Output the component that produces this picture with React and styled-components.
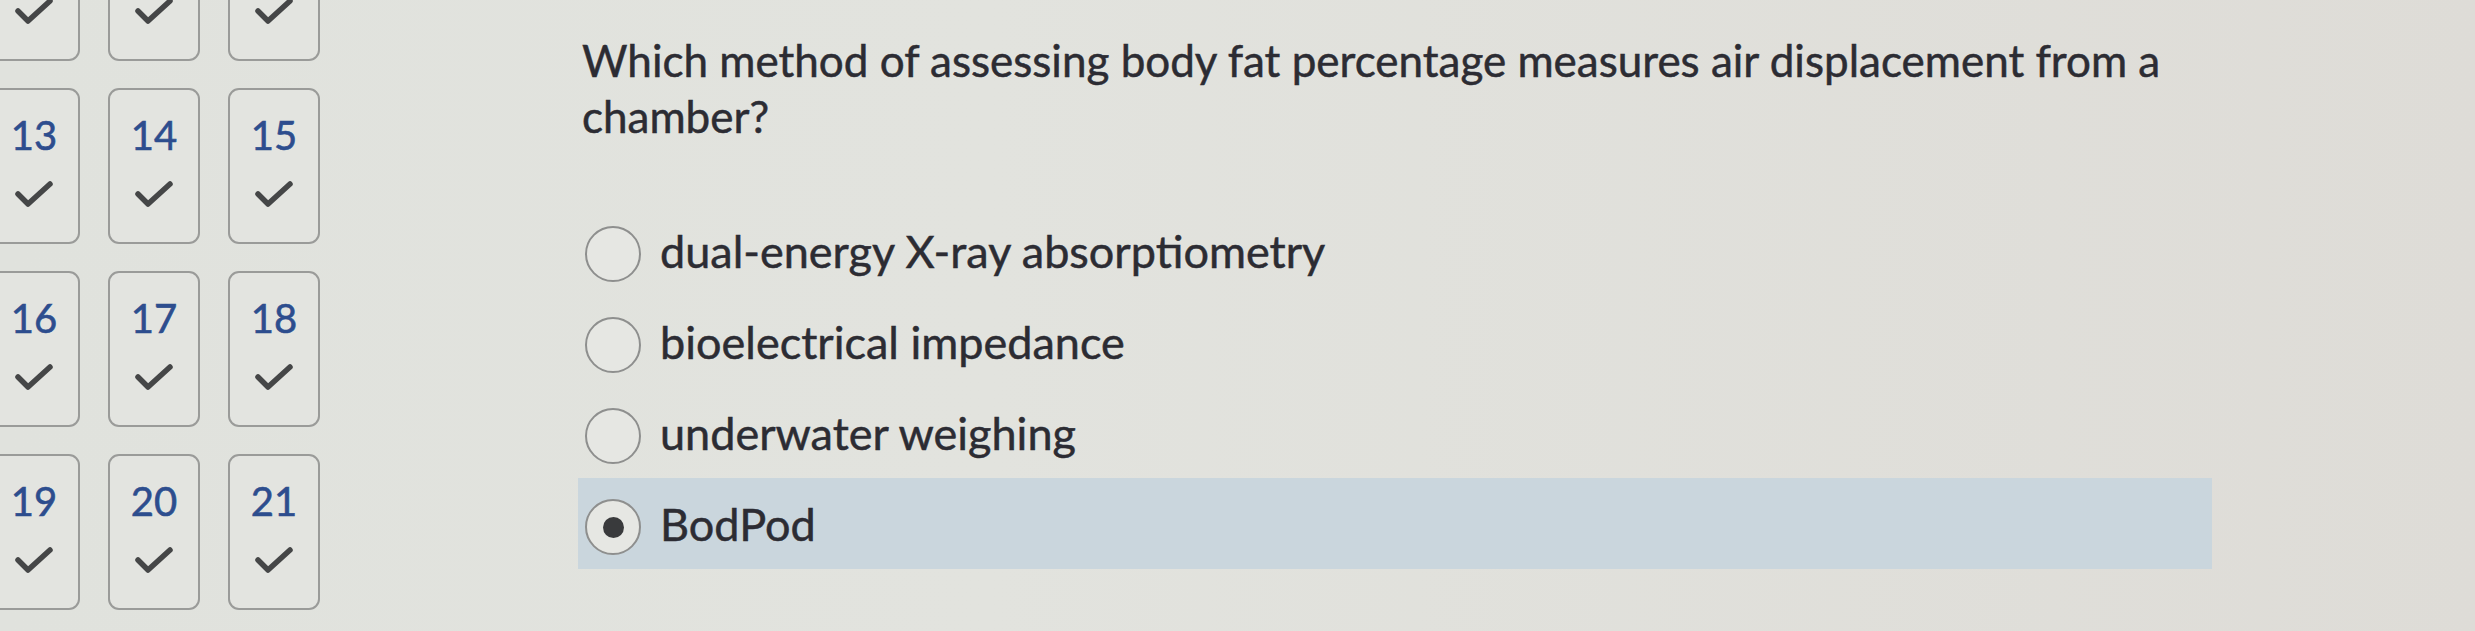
import React from 'react'
import styled, { createGlobalStyle } from 'styled-components'

const GlobalStyle = createGlobalStyle`
  html, body {
    margin: 0;
    padding: 0;
    overflow: hidden;
  }
  body {
    width: 2475px;
    height: 631px;
    background: linear-gradient(90deg, #e0e2dd 0%, #e2e3de 40%, #dedcd7 100%);
    font-family: Lato, "Open Sans", sans-serif;
    color: #2c2c33;
  }
`

const Page = styled.div`
  display: flex;
  align-items: flex-start;
  height: 631px;
  overflow: hidden;
`

const QuestionGrid = styled.nav`
  display: grid;
  grid-template-columns: repeat(3, 92px);
  grid-auto-rows: 156px;
  column-gap: 28px;
  row-gap: 27px;
  margin-left: -12px;
  margin-top: -95px;
  flex-shrink: 0;
`

const Tile = styled.div`
  box-sizing: border-box;
  border: 2px solid #9a9b99;
  border-radius: 11px;
  background: #e3e4e0;
  display: flex;
  flex-direction: column;
  align-items: center;
  padding-top: 21px;
`

const TileNumber = styled.span`
  font-size: 40px;
  line-height: 1.2;
  color: #2d4d8e;
  -webkit-text-stroke: 0.6px #2d4d8e;
`

const TileCheck = styled.svg`
  width: 40px;
  height: 31px;
  margin-top: 19px;
`

const Main = styled.main`
  margin-left: 258px;
  width: 1634px;
  padding-top: 32px;
`

const Question = styled.p`
  margin: 0 0 61px 4px;
  font-size: 44px;
  line-height: 56px;
  width: 1630px;
  -webkit-text-stroke: 0.5px #2c2c33;
`

const Options = styled.div`
  display: flex;
  flex-direction: column;
`

const Option = styled.label`
  display: flex;
  align-items: center;
  height: 91px;
  padding-left: 7px;
  background: ${props => (props.selected ? '#cad6dd' : 'transparent')};
  font-size: 45px;
  line-height: 1.2;
  -webkit-text-stroke: 0.5px #2c2c33;
`

const Radio = styled.span`
  box-sizing: border-box;
  width: 56px;
  height: 56px;
  margin-top: 7px;
  border-radius: 50%;
  border: 2px solid #8e8f8e;
  background: #e6e7e3;
  display: flex;
  align-items: center;
  justify-content: center;
  flex-shrink: 0;
  margin-right: 19px;

  &::after {
    content: '';
    display: ${props => (props.checked ? 'block' : 'none')};
    width: 21px;
    height: 21px;
    border-radius: 50%;
    background: #393a3c;
  }
`

const Check = () => (
  <TileCheck viewBox="0 0 40 31">
    <polyline
      points="4,16 14,26 36,6"
      fill="none"
      stroke="#454647"
      strokeWidth="5.5"
      strokeLinecap="round"
      strokeLinejoin="round"
    />
  </TileCheck>
)

const numbers = [10, 11, 12, 13, 14, 15, 16, 17, 18, 19, 20, 21]

const answers = [
  'dual-energy X-ray absorptiometry',
  'bioelectrical impedance',
  'underwater weighing',
  'BodPod',
]

export default function App() {
  const selected = 3
  return (
    <>
      <GlobalStyle />
      <Page>
        <QuestionGrid>
          {numbers.map(n => (
            <Tile key={n}>
              <TileNumber>{n}</TileNumber>
              <Check />
            </Tile>
          ))}
        </QuestionGrid>
        <Main>
          <Question>
            Which method of assessing body fat percentage measures air displacement from a chamber?
          </Question>
          <Options>
            {answers.map((a, i) => (
              <Option key={a} selected={i === selected}>
                <Radio checked={i === selected} />
                {a}
              </Option>
            ))}
          </Options>
        </Main>
      </Page>
    </>
  )
}
